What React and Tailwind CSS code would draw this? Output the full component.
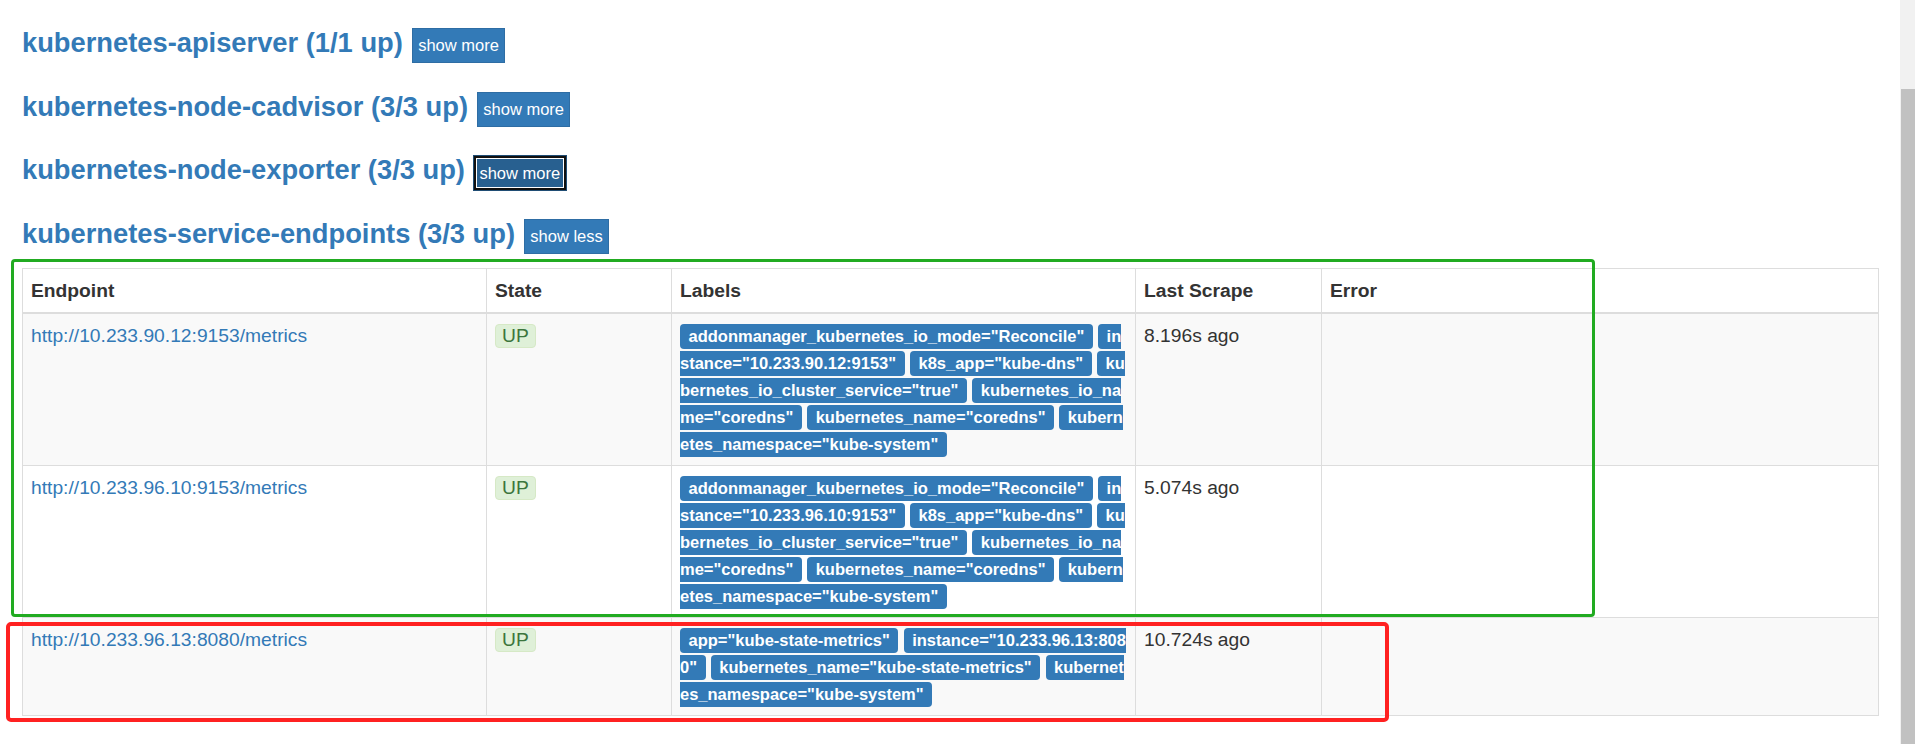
import React from 'react';

const jobs = [
  { name: 'kubernetes-apiserver', up: '1/1', action: 'show more' },
  { name: 'kubernetes-node-cadvisor', up: '3/3', action: 'show more' },
  { name: 'kubernetes-node-exporter', up: '3/3', action: 'show more', focused: true },
  { name: 'kubernetes-service-endpoints', up: '3/3', action: 'show less' },
];

const dnsLabels = (ip) => [
  'addonmanager_kubernetes_io_mode="Reconcile"',
  `instance="${ip}"`,
  'k8s_app="kube-dns"',
  'kubernetes_io_cluster_service="true"',
  'kubernetes_io_name="coredns"',
  'kubernetes_name="coredns"',
  'kubernetes_namespace="kube-system"',
];

const targets = [
  { endpoint: 'http://10.233.90.12:9153/metrics', labels: dnsLabels('10.233.90.12:9153'), scrape: '8.196s ago' },
  { endpoint: 'http://10.233.96.10:9153/metrics', labels: dnsLabels('10.233.96.10:9153'), scrape: '5.074s ago' },
  {
    endpoint: 'http://10.233.96.13:8080/metrics',
    labels: [
      'app="kube-state-metrics"',
      'instance="10.233.96.13:8080"',
      'kubernetes_name="kube-state-metrics"',
      'kubernetes_namespace="kube-system"',
    ],
    scrape: '10.724s ago',
  },
];

function JobHeading({ job }) {
  return (
    <h2 className="flex h-[35px] items-center text-[27.3px] font-bold text-[#337ab7]">
      <a href={`#job-${job.name}`} className="mb-[4px]">
        {job.name} ({job.up} up)
      </a>
      {job.focused ? (
        <button className="ml-[8px] h-[36px] border border-[#204d74] bg-[#286090] px-[5.5px] text-[16.5px] font-normal text-white shadow-[inset_0_0_0_2px_#101010,inset_0_0_0_3px_#ffffff]">
          {job.action}
        </button>
      ) : (
        <button className="ml-[9px] h-[35px] border border-[#2e6da4] bg-[#337ab7] px-[5.3px] text-[16.5px] font-normal text-white">
          {job.action}
        </button>
      )}
    </h2>
  );
}

export default function App() {
  return (
    <div className="flex h-[744px] w-[1915px] overflow-hidden bg-white font-['Liberation_Sans',Arial,sans-serif] text-[#333]">
      <div className="relative flex-1 pl-[22px] pr-[21px] pt-[28px]">
        <div className="flex flex-col gap-[28.7px]">
          {jobs.map((job) => (
            <JobHeading key={job.name} job={job} />
          ))}
        </div>

        <table className="mt-[14px] w-full table-fixed border-collapse border border-[#ddd] text-[19.25px] leading-[27px]">
          <colgroup>
            <col className="w-[464px]" />
            <col className="w-[185px]" />
            <col className="w-[464px]" />
            <col className="w-[186px]" />
            <col className="w-[557px]" />
          </colgroup>
          <thead>
            <tr className="bg-white">
              {['Endpoint', 'State', 'Labels', 'Last Scrape', 'Error'].map((h) => (
                <th key={h} className="border border-b-2 border-[#ddd] p-[8px] text-left align-bottom font-bold">
                  {h}
                </th>
              ))}
            </tr>
          </thead>
          <tbody>
            {targets.map((t, i) => (
              <tr key={t.endpoint} className={i % 2 === 0 ? 'bg-[#f9f9f9]' : 'bg-white'}>
                <td className="border border-[#ddd] p-[8px] align-top">
                  <a href={t.endpoint} className="text-[#337ab7]">{t.endpoint}</a>
                </td>
                <td className="border border-[#ddd] p-[8px] align-top">
                  <span className="inline-block rounded-[4px] border border-[#d6e9c6] bg-[#dff0d8] px-[6px] leading-[22px] text-[#3c763d]">
                    UP
                  </span>
                </td>
                <td className="border border-[#ddd] p-[8px] align-top break-all">
                  {t.labels.map((l) => (
                    <React.Fragment key={l}>
                      <span className="rounded-[4px] bg-[#337ab7] px-[8.5px] pt-[3px] pb-[4px] text-[16.5px] font-bold leading-none text-white">
                        {l}
                      </span>{' '}
                    </React.Fragment>
                  ))}
                </td>
                <td className="border border-[#ddd] p-[8px] align-top">{t.scrape}</td>
                <td className="border border-[#ddd] p-[8px] align-top"></td>
              </tr>
            ))}
          </tbody>
        </table>

        {/* annotation boxes drawn over the table */}
        <div className="pointer-events-none absolute left-[11px] top-[259px] h-[358px] w-[1584px] rounded-[4px] border-[3px] border-[#21ab21]" />
        <div className="pointer-events-none absolute left-[6px] top-[622px] h-[100px] w-[1383px] rounded-[5px] border-[4px] border-[#ff2121]" />
      </div>

      {/* scrollbar */}
      <div className="w-[16px] bg-[#f1f1f1] pl-[1px] pt-[89px]">
        <div className="h-full bg-[#c1c1c1]" />
      </div>
    </div>
  );
}
